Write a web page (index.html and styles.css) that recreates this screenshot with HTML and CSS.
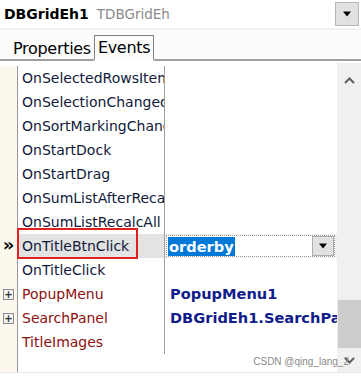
FILE: index.html
```html
<!DOCTYPE html>
<html>
<head>
<meta charset="utf-8">
<link rel="stylesheet" href="styles.css">
</head>
<body>
<div class="app">
  <div class="header">
    <span class="obj">DBGridEh1</span>
    <span class="cls">TDBGridEh</span>
    <span class="hdrbtn"><svg width="10" height="6" viewBox="0 0 10 6"><path d="M1 0.5 H9 L5 5.5 Z" fill="#000"/></svg></span>
  </div>
  <div class="tabs">
    <span class="tab">Properties</span>
    <span class="tab active">Events</span>
  </div>
  <div class="pane">
    <div class="main">
      <div class="row"><span class="gut"></span><span class="name">OnSelectedRowsItemChanged</span><span class="val"></span></div>
      <div class="row"><span class="gut"></span><span class="name">OnSelectionChanged</span><span class="val"></span></div>
      <div class="row"><span class="gut"></span><span class="name">OnSortMarkingChanged</span><span class="val"></span></div>
      <div class="row"><span class="gut"></span><span class="name">OnStartDock</span><span class="val"></span></div>
      <div class="row"><span class="gut"></span><span class="name">OnStartDrag</span><span class="val"></span></div>
      <div class="row"><span class="gut"></span><span class="name">OnSumListAfterRecalcAll</span><span class="val"></span></div>
      <div class="row"><span class="gut"></span><span class="name">OnSumListRecalcAll</span><span class="val"></span></div>
      <div class="row sel"><span class="gut"><span class="mark">»</span></span><span class="name">OnTitleBtnClick</span><span class="val"><span class="editor"><span class="hl">orderby</span><span class="edbtn"><svg width="10" height="6" viewBox="0 0 10 6"><path d="M1 0.5 H9 L5 5.5 Z" fill="#000"/></svg></span></span></span></div>
      <div class="row"><span class="gut"></span><span class="name">OnTitleClick</span><span class="val"></span></div>
      <div class="row"><span class="gut"><span class="plus">+</span></span><span class="name sub">PopupMenu</span><span class="val bold">PopupMenu1</span></div>
      <div class="row"><span class="gut"><span class="plus">+</span></span><span class="name sub">SearchPanel</span><span class="val bold">DBGridEh1.SearchPanel</span></div>
      <div class="row"><span class="gut"></span><span class="name sub">TitleImages</span><span class="val"></span></div>
      <div class="filler"><span class="gut"></span><span class="fill"></span></div>
      <div class="redbox"></div>
    </div>
    <div class="scroll">
      <span class="arrow up"><svg width="11" height="7" viewBox="0 0 11 7"><path d="M1 6 L5.5 1.5 L10 6" fill="none" stroke="#606060" stroke-width="2"/></svg></span>
      <span class="track"></span>
      <span class="thumb"></span>
      <span class="arrow down"><svg width="11" height="7" viewBox="0 0 11 7"><path d="M1 1 L5.5 5.5 L10 1" fill="none" stroke="#606060" stroke-width="2"/></svg></span>
    </div>
  </div>
  <div class="watermark">CSDN @qing_lang_2</div>
</div>
</body>
</html>
```
FILE: styles.css
```css
html, body {
  margin: 0;
  padding: 0;
  background: #ffffff;
}
.app {
  position: relative;
  width: 361px;
  height: 376px;
  overflow: hidden;
  font-family: "DejaVu Sans", Verdana, sans-serif;
  font-size: 14px;
  color: #000;
}
.header {
  height: 28px;
  display: flex;
  align-items: center;
  padding-left: 4px;
}
.obj {
  font-weight: bold;
  font-size: 14px;
}
.cls {
  color: #8a8a8a;
  margin-left: 8px;
  font-size: 13.5px;
}
.hdrbtn {
  margin-left: auto;
  margin-right: 2px;
  width: 24px;
  height: 24px;
  box-sizing: border-box;
  background: #e1e1e1;
  border: 1px solid #b5b5b5;
  display: flex;
  align-items: center;
  justify-content: center;
}
.tabs {
  height: 33px;
  box-sizing: border-box;
  border-top: 2px solid #f0f0f0;
  background: #fcfcfc;
  display: flex;
  align-items: flex-end;
  border-bottom: 2px solid #a0a0a0;
  font-family: "DejaVu Sans", Verdana, sans-serif;
  font-size: 16px;
}
.tab {
  height: 22px;
  line-height: 24px;
  margin-bottom: -2px;
  border-bottom: 2px solid #a0a0a0;
}
.tab:first-child {
  margin-left: 13px;
  margin-right: 3px;
  letter-spacing: -0.3px;
}
.tab.active {
  border: 1px solid #808080;
  border-bottom: 2px solid #fcfcfc;
  height: 23px;
  padding: 0 3px 0 3px;
  letter-spacing: -0.3px;
}
.pane {
  display: flex;
  height: 309px;
  border-bottom: 1px solid #e8e8e8;
  margin-top: 2px;
}
.main {
  position: relative;
  width: 337px;
  display: flex;
  flex-direction: column;
  padding-top: 3px;
  background: #fff;
}
.row {
  height: 24px;
  display: flex;
  flex: none;
}
.gut {
  width: 18px;
  flex: none;
  background: #fcf8ee;
  border-right: 1px solid #9a9a9a;
  box-sizing: border-box;
  position: relative;
  display: flex;
  align-items: center;
  justify-content: center;
}
.name {
  width: 147px;
  flex: none;
  box-sizing: border-box;
  border-right: 1px solid #a0a0a0;
  padding-left: 4px;
  line-height: 24px;
  white-space: nowrap;
  overflow: hidden;
  color: #101a3a;
}
.name.sub {
  color: #8b1010;
}
.val {
  flex: 1;
  line-height: 24px;
  padding-left: 5px;
  white-space: nowrap;
  overflow: hidden;
}
.val.bold {
  font-weight: bold;
  color: #101c8c;
  font-size: 14.6px;
}
.row.sel .name {
  background: #e3e3e3;
}
.row.sel .val {
  padding: 1px 2px 1px 1px;
  background: #f0f0f0;
}
.editor {
  display: flex;
  height: 22px;
  box-sizing: border-box;
  border: 1px dotted #9a9a9a;
  background: #fff;
  align-items: center;
}
.hl {
  background: #0078d7;
  color: #fff;
  font-weight: bold;
  font-size: 14.6px;
  line-height: 19px;
  padding: 0 1px;
  margin-left: 1px;
}
.edbtn {
  margin-left: auto;
  width: 22px;
  height: 20px;
  box-sizing: border-box;
  background: #e1e1e1;
  border: 1px solid #adadad;
  display: flex;
  align-items: center;
  justify-content: center;
}
.mark {
  font-weight: bold;
  font-size: 18px;
  line-height: 14px;
  margin-top: -3px;
}
.plus {
  width: 9px;
  height: 9px;
  border: 1px solid #8a8a8a;
  background: #f2f2f2;
  font-size: 10px;
  line-height: 9px;
  text-align: center;
  color: #333;
  font-weight: bold;
}
.filler {
  flex: 1;
  display: flex;
}
.fill {
  flex: 1;
}
.redbox {
  position: absolute;
  left: 17px;
  top: 165px;
  width: 121px;
  height: 31px;
  box-sizing: border-box;
  border: 2px solid #e0201e;
}
.scroll {
  width: 24px;
  background: #f0f0f0;
  display: flex;
  flex-direction: column;
  align-items: center;
}
.arrow {
  height: 24px;
  display: flex;
  align-items: center;
  justify-content: center;
}
.arrow.up {
  margin-top: 5px;
}
.track {
  flex: 1;
}
.thumb {
  width: 23px;
  height: 48px;
  background: #cdcdcd;
}
.watermark {
  position: absolute;
  right: 12px;
  bottom: 9px;
  font-family: "Liberation Sans", Arial, sans-serif;
  font-size: 10px;
  color: #8a8a8a;
}
```
